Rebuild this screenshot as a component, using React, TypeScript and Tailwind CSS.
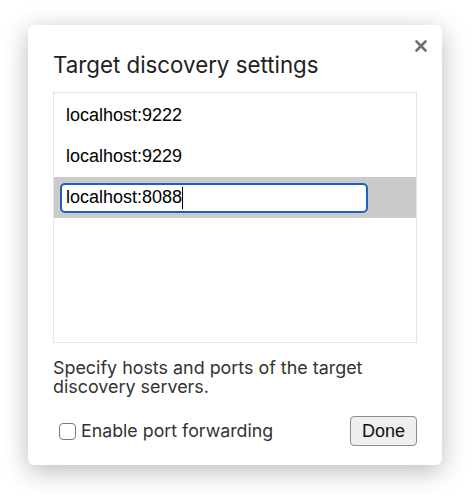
import React from "react";

export default function App() {
  const sys = { fontFamily: 'Inter, "Liberation Sans", sans-serif' };
  const helv = { fontFamily: '"Liberation Sans", Arial, sans-serif' };
  return (
    <div className="w-[474px] h-[496px] bg-white pt-[25px] pl-[28px]">
      <div className="relative w-[414px] h-[440px] bg-white rounded-[6px] shadow-[0_6px_26px_rgba(0,0,0,0.28)] px-[25px] pt-[26px]">
        <button className="absolute right-[15px] top-[15px] w-[12px] h-[12px] flex items-center justify-center">
          <svg width="12" height="12" viewBox="0 0 12 12">
            <path d="M1.5 1.5 L10.5 10.5 M10.5 1.5 L1.5 10.5" stroke="#707070" strokeWidth="2.6" strokeLinecap="round" />
          </svg>
        </button>
        <div className="text-[22.3px] leading-[28px] text-[#222]" style={sys}>
          Target discovery settings
        </div>
        <div className="mt-[13px] h-[251px] border border-[#e4e4e4] pt-[2px]" style={helv}>
          <div className="h-[41px] flex items-center pl-[12px] text-[18px] text-black">localhost:9222</div>
          <div className="h-[41px] flex items-center pl-[12px] text-[18px] text-black">localhost:9229</div>
          <div className="h-[41px] flex items-center pl-[6px] bg-[#cbcbcb]">
            <div className="w-[308px] h-[30px] bg-white border-2 border-[#1e5fc0] rounded-[5px] flex items-center pl-[4px] text-[18px] text-black">
              <span>localhost:8088</span>
              <span className="inline-block w-[1px] h-[22px] bg-black" />
            </div>
          </div>
        </div>
        <div className="mt-[15px] text-[17.9px] leading-[19px] text-[#333]" style={sys}>
          Specify hosts and ports of the target discovery servers.
        </div>
        <div className="mt-[20px] flex items-center justify-between">
          <label className="flex items-center ml-[6px]">
            <span className="w-[17px] h-[17px] border border-[#7a7a7a] rounded-[4px] bg-white" />
            <span className="ml-[5px] text-[17.8px] text-[#333]" style={sys}>Enable port forwarding</span>
          </label>
          <button className="w-[67px] h-[30px] bg-[#efefef] border border-[#8c8c8c] rounded-[4px] text-[18px] text-[#111] flex items-center justify-center" style={helv}>
            Done
          </button>
        </div>
      </div>
    </div>
  );
}
